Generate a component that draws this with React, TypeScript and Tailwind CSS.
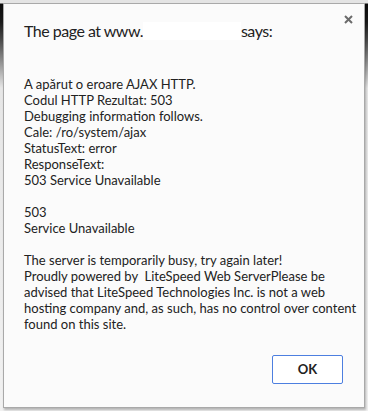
import React from "react";

const lines = [
  "A apărut o eroare AJAX HTTP.",
  "Codul HTTP Rezultat: 503",
  "Debugging information follows.",
  "Cale: /ro/system/ajax",
  "StatusText: error",
  "ResponseText:",
  "503 Service Unavailable",
  "",
  "503",
  "Service Unavailable",
  "",
  "The server is temporarily busy, try again later!",
  "Proudly powered by  LiteSpeed Web ServerPlease be",
  "advised that LiteSpeed Technologies Inc. is not a web",
  "hosting company and, as such, has no control over content",
  "found on this site.",
];

export default function App() {
  return (
    <div
      className="w-[368px] h-[411px] overflow-hidden bg-[linear-gradient(to_bottom,#e4e4e4_0px,#e4e4e4_3px,#0c0c0c_4px,#1a1a1a_22px,#4a4a4a_40px,#8a8a8a_60px,#e6e6e6_88px,#f1f1f1_100%)] pt-[3px] pl-[3px]"
      style={{ fontFamily: "Lato, 'Open Sans', sans-serif" }}
    >
      {/* dialog */}
      <div className="relative w-[362px] h-[405px] bg-[#fbfbfb] border border-[#a9a9a9] shadow-[1px_2px_2px_rgba(0,0,0,0.25)] flex flex-col">
        {/* close */}
        <svg className="absolute right-[11px] top-[11px]" width="9" height="9" viewBox="0 0 9 9">
          <path d="M1 1L8 8M8 1L1 8" stroke="#6b6b6b" strokeWidth="2" />
        </svg>

        <div className="pl-[20px] pt-[17px] text-[16px] leading-[20px] tracking-[-0.5px] text-[#222] flex items-center">
          <span>The page at www.</span>
          <span className="inline-block w-[98px] h-[18px] bg-white" />
          <span>says:</span>
        </div>

        <div className="pl-[20px] pt-[35px] text-[13px] leading-[16px] text-[#222]">
          {lines.map((l, i) => (
            <div key={i} className="h-[16px] whitespace-pre">
              {l}
            </div>
          ))}
        </div>

        <div className="flex justify-end pr-[21px] pt-[23px]">
          <button className="w-[71px] h-[29px] border border-[#4d7fe0] rounded-[2px] bg-white text-[13px] font-bold text-[#222]">
            OK
          </button>
        </div>
      </div>
    </div>
  );
}
